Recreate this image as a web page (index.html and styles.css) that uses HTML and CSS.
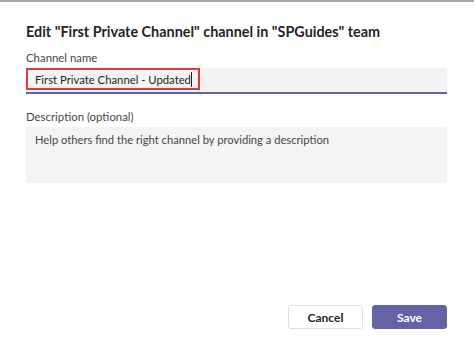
FILE: index.html
```html
<!DOCTYPE html>
<html>
<head>
<meta charset="utf-8">
<link rel="stylesheet" href="styles.css">
</head>
<body>
<div class="topstrip"></div>
<div class="dialog">
  <h1 class="title">Edit "First Private Channel" channel in "SPGuides" team</h1>
  <div class="field">
    <label class="label">Channel name</label>
    <div class="input">
      <span class="highlight">First Private Channel - Updated<span class="caret"></span></span>
    </div>
  </div>
  <div class="field desc-field">
    <label class="label">Description (optional)</label>
    <div class="textarea">Help others find the right channel by providing a description</div>
  </div>
  <div class="spacer"></div>
  <div class="actions">
    <button class="btn btn-cancel">Cancel</button>
    <button class="btn btn-save">Save</button>
  </div>
</div>
</body>
</html>
```
FILE: styles.css
```css
html, body {
  margin: 0;
  padding: 0;
  background: #ffffff;
}
body {
  width: 474px;
  height: 353px;
  overflow: hidden;
  font-family: Lato, "Open Sans", sans-serif;
  color: #252423;
}
.topstrip {
  height: 2px;
  background: #a9a9a9;
}
.dialog {
  display: flex;
  flex-direction: column;
  height: 351px;
  box-sizing: border-box;
  padding: 20px 27px 0 26px;
}
.title {
  margin: 0;
  font-size: 14.4px;
  font-weight: 700;
  line-height: 20px;
  color: #252423;
  white-space: nowrap;
}
.field {
  display: flex;
  flex-direction: column;
  margin-top: 8px;
}
.label {
  font-size: 11.4px;
  line-height: 16px;
  color: #484644;
  margin-bottom: 2px;
}
.input {
  height: 24px;
  background: #f3f3f3;
  border-bottom: 2px solid #6264a7;
  display: flex;
  align-items: flex-start;
}
.highlight {
  box-sizing: border-box;
  height: 22px;
  width: 174px;
  border: 2px solid #e0393e;
  display: flex;
  align-items: center;
  padding-left: 7px;
  font-size: 11.3px;
  color: #252423;
  white-space: nowrap;
}
.caret {
  display: inline-block;
  width: 1px;
  height: 15px;
  background: #252423;
}
.desc-field {
  margin-top: 15px;
}
.textarea {
  height: 56px;
  background: #f4f4f4;
  box-sizing: border-box;
  padding: 5px 9px;
  font-size: 11.2px;
  line-height: 16px;
  color: #484644;
}
.spacer {
  flex: 1;
}
.actions {
  display: flex;
  justify-content: flex-end;
  gap: 9px;
  margin-bottom: 24px;
}
.btn {
  font-family: Lato, "Open Sans", sans-serif;
  height: 24px;
  width: 75px;
  border-radius: 3px;
  font-size: 12px;
  font-weight: 700;
  cursor: pointer;
}
.btn-cancel {
  background: #ffffff;
  border: 1px solid #e1dfdd;
  color: #252423;
}
.btn-save {
  background: #6264a7;
  border: 1px solid #6264a7;
  color: #ffffff;
}
```
